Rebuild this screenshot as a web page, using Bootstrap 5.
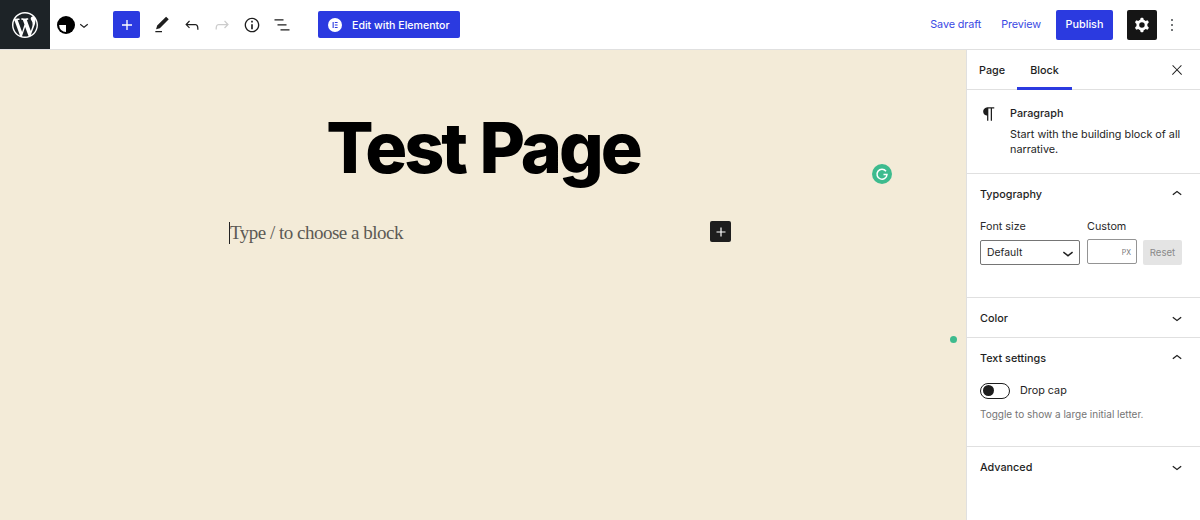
<!doctype html>
<html lang="en"><head><meta charset="utf-8"><title>Test Page</title>
<link rel="stylesheet" href="https://cdn.jsdelivr.net/npm/bootstrap@5.3.0/dist/css/bootstrap.min.css">
<style>
html,body{height:100%;overflow:hidden}
body{font-family:Inter,"Liberation Sans",sans-serif;font-size:10.8px;color:#1e1e1e;background:#fff}
svg{display:block;fill:currentColor}
.ed-top{height:50px;border-bottom:1px solid #e0e0e0;background:#fff}
.wp-box{width:50px;height:49px;background:#1d2327;color:#fff}
.style-pick{margin-left:7px;width:36px}
.blue-sq{width:27px;height:27px;background:#2b3ae0;color:#fff;border-radius:2px;margin-left:20px;padding:0;border:0}
.tool-set{margin-left:7px}
.tool-btn{width:30px;height:30px;padding:0;border:0;background:none;color:#1e1e1e}
.tool-off{color:#ccc}
.ele-btn{margin-left:21px;width:142px;height:27px;background:#2b3ae0;color:#fff;border-radius:2px;border:0;font-size:10.6px;font-weight:500;padding:0 0 0 10px;gap:10px}
.ele-lab{padding-top:2px}
.ele-ico{width:14px;height:14px;background:#fff;border-radius:50%;color:#2b3ae0}
.link-act{color:#3a49e4;font-size:10.8px;font-weight:400;letter-spacing:-.1px;text-decoration:none;padding-top:1px}
.save-gap{margin-right:20px}
.pub-btn{width:57px;height:30px;background:#2b3ae0;color:#fff;border-radius:2px;border:0;font-size:10.8px;font-weight:500;padding:2px 0 0;margin-left:15px}
.gear-btn{width:30px;height:30px;background:#151515;color:#fff;border-radius:2px;border:0;padding:4px;margin-left:14px}
.dot-btn{width:30px;padding:0;border:0;background:none;margin-right:13px}
.ed-main{height:470px}
.ed-canvas{flex:1 1 auto;background:#f3ebd8;position:relative;min-width:0}
.page-title{font-size:70px;font-weight:850;letter-spacing:-3px;word-spacing:2px;line-height:1;color:#000;text-align:center;margin:0;padding-top:63px}
.block-row{width:502px;margin:39px 0 0 229px;height:24px;position:relative}
.ph-text{font-family:"Liberation Serif",serif;font-size:19px;letter-spacing:-.5px;color:#5c5a55;border-left:1px solid #222;line-height:22px;height:22px;white-space:nowrap}
.ins-btn{width:21px;height:21px;background:#1e1e1e;color:#fff;border-radius:2px;border:0;padding:0;position:absolute;right:0;top:-1px}
.gram-big{position:absolute;left:872px;top:114px;width:20px;height:20px;border-radius:50%;background:#3dbb8e;color:#fff}
.gram-dot{position:absolute;left:950px;top:286px;width:7px;height:7px;border-radius:50%;background:#3dbb8e}
.ed-side{width:234px;flex:0 0 234px;border-left:1px solid #e0e0e0;background:#fff}
.side-tabs{height:40px;border-bottom:1px solid #e0e0e0}
.side-tab{height:40px;padding:0 12px;font-weight:500;color:#1e1e1e;line-height:41px}
.side-tab-on{border-bottom:3px solid #2b3ae0;width:55px;text-align:center;padding:0}
.tab-x{margin-left:auto;margin-right:15px}
.sec-box{border-bottom:1px solid #e0e0e0}
.info-box{height:84px;padding:14px 12px 0 12px;gap:11px}
.sec-title{font-weight:500;margin:3px 0 0;line-height:14px}
.info-text{line-height:15px;margin:6px 0 0}
.sec-head{height:39px;padding:0 13px;font-weight:500}
.sec-head span{padding-top:4px}
.sec-h1{height:124px}
.sec-h3{height:109px}
.sec-color{height:40px}
.sec-adv{height:39px}
.field-lab{line-height:14px;color:#2a2a2a;padding-top:1px}
.sel-fake{width:100px;height:25px;border:1px solid #757575;border-radius:2px;padding:0 0 0 6px;margin-top:6px;font-size:10.4px}
.num-wrap{margin-left:7px}
.num-fake{width:50px;height:25px;border:1px solid #949494;border-radius:2px;margin-top:5px;padding:3px 5px 0 0;font-size:7px;color:#757575}
.reset-fake{width:39px;height:25px;background:#e4e4e4;color:#8a8a8a;border-radius:2px;font-size:9.6px;margin-left:6px;margin-top:21px;padding-top:1px}
.type-row{padding:6px 0 0 13px}
.text-body-box{padding:5px 13px 0}
.tog-row{gap:10px}
.tog-lab{padding-top:1px}
.tog-fake{width:30px;height:16px;border:1px solid #1e1e1e;border-radius:8px;padding-left:2px}
.tog-knob{width:11px;height:11px;background:#1e1e1e;border-radius:50%}
.help-txt{font-size:10px;color:#757575;margin:8px 0 0;line-height:14px}
</style></head><body>
<header class="ed-top d-flex align-items-center">
 <div class="wp-box d-flex align-items-center justify-content-center flex-shrink-0"><svg width="26" height="26" viewBox="0 0 20 20"><path d="M20 10c0-5.51-4.49-10-10-10C4.48 0 0 4.49 0 10c0 5.52 4.48 10 10 10 5.51 0 10-4.48 10-10zM7.78 15.37L4.37 6.22c.55-.02 1.17-.08 1.17-.08.5-.06.44-1.13-.06-1.11 0 0-1.45.11-2.37.11-.18 0-.37 0-.58-.01C4.12 2.69 6.87 1.11 10 1.11c2.33 0 4.45.87 6.05 2.34-.68-.11-1.65.39-1.65 1.58 0 .74.45 1.36.9 2.1.35.61.55 1.36.55 2.46 0 1.49-1.4 5-1.4 5l-3.03-8.37c.54-.02.82-.17.82-.17.5-.05.44-1.25-.06-1.22 0 0-1.44.12-2.38.12-.87 0-2.33-.12-2.33-.12-.5-.03-.56 1.2-.06 1.22l.92.08 1.26 3.41zM17.41 10c.24-.64.74-1.87.43-4.25.7 1.29 1.05 2.71 1.05 4.25 0 3.29-1.73 6.24-4.4 7.78.97-2.59 1.94-5.2 2.92-7.78zM6.1 18.09C3.12 16.65 1.11 13.53 1.11 10c0-1.3.23-2.48.72-3.59C3.25 10.3 4.67 14.2 6.1 18.09zm4.03-6.63l2.58 6.98c-.86.29-1.76.45-2.71.45-.79 0-1.57-.11-2.29-.33.81-2.38 1.62-4.74 2.42-7.1z"/></svg></div>
 <div class="style-pick d-flex align-items-center flex-shrink-0">
  <svg width="18" height="18" viewBox="0 0 18 18"><circle cx="9" cy="9" r="9" fill="#000"/><path d="M9 9v6.9A6.9 6.9 0 0 1 2.1 9z" fill="#fff"/></svg>
  <svg width="18" height="18" viewBox="0 0 24 24"><path d="M17.5 11.6L12 16l-5.5-4.4.9-1.2L12 14l4.5-3.6 1 1.2z"/></svg>
 </div>
 <button class="btn blue-sq d-flex align-items-center justify-content-center flex-shrink-0" aria-label="Add block"><svg width="20" height="20" viewBox="0 0 24 24"><path d="M18 11.2h-5.2V6h-1.6v5.2H6v1.6h5.2V18h1.6v-5.2H18z"/></svg></button>
 <div class="tool-set d-flex align-items-center flex-shrink-0">
  <button class="btn tool-btn d-flex align-items-center justify-content-center" aria-label="Tools"><svg width="20" height="20" viewBox="0 0 24 24"><path d="M20.1 5.1L16.9 2 6.2 12.7l-1.3 4.4 4.5-1.3L20.1 5.1zM4 20.8h8v-1.5H4v1.5z"/></svg></button>
  <button class="btn tool-btn d-flex align-items-center justify-content-center" aria-label="Undo"><svg width="20" height="20" viewBox="0 0 24 24"><path d="M18.3 11.7c-.6-.6-1.4-.9-2.3-.9H6.7l2.9-3.3-1.1-1-4.5 5L8.5 16l1-1-2.7-2.7H16c.5 0 .9.2 1.3.5 1 1 1 3.4 1 4.5v.3h1.5v-.2c0-1.5 0-4.3-1.5-5.7z"/></svg></button>
  <button class="btn tool-btn tool-off d-flex align-items-center justify-content-center" aria-label="Redo"><svg width="20" height="20" viewBox="0 0 24 24"><path d="M15.6 6.5l-1.1 1 2.9 3.3H8c-.9 0-1.7.3-2.3.9-1.4 1.5-1.4 4.2-1.4 5.6v.2h1.5v-.3c0-1.1 0-3.5 1-4.5.3-.3.7-.5 1.3-.5h9.2L14.5 15l1.1 1.1 4.6-4.6-4.6-5z"/></svg></button>
  <button class="btn tool-btn d-flex align-items-center justify-content-center" aria-label="Details"><svg width="20" height="20" viewBox="0 0 24 24"><path d="M12 3.2c-4.8 0-8.8 3.9-8.8 8.8 0 4.8 3.9 8.8 8.8 8.8 4.8 0 8.8-3.9 8.8-8.8 0-4.8-4-8.8-8.8-8.8zm0 16c-4 0-7.2-3.3-7.2-7.2C4.8 8 8 4.8 12 4.8s7.2 3.3 7.2 7.2c0 4-3.2 7.2-7.2 7.2zM11 17h2v-6h-2v6zm0-8h2V7h-2v2z"/></svg></button>
  <button class="btn tool-btn d-flex align-items-center justify-content-center" aria-label="List view"><svg width="20" height="20" viewBox="0 0 24 24"><path d="M13.8 5.2H3v1.5h10.8V5.2zm-3.6 12v1.5H21v-1.5H10.2zm7.2-6H6.6v1.5h10.8v-1.5z"/></svg></button>
 </div>
 <button class="btn ele-btn d-flex align-items-center flex-shrink-0"><span class="ele-ico d-flex align-items-center justify-content-center"><svg width="14" height="14" viewBox="0 0 14 14"><path d="M4.6 4h1.1v6H4.6zM6.8 4h2.8v1.1H6.8zM6.8 6.45h2.8v1.1H6.8zM6.8 8.9h2.8V10H6.8z"/></svg></span><span class="ele-lab">Edit with Elementor</span></button>
 <div class="ms-auto d-flex align-items-center">
  <a class="link-act save-gap" href="#">Save draft</a>
  <a class="link-act" href="#">Preview</a>
  <button class="btn pub-btn">Publish</button>
  <button class="btn gear-btn" aria-label="Settings"><svg width="22" height="22" viewBox="0 0 24 24"><path fill-rule="evenodd" d="M10.289 4.836A1 1 0 0111.275 4h1.306a1 1 0 01.987.836l.244 1.466c.787.26 1.503.679 2.108 1.218l1.393-.522a1 1 0 011.216.437l.653 1.13a1 1 0 01-.23 1.273l-1.148.944a6.025 6.025 0 010 2.435l1.149.946a1 1 0 01.23 1.272l-.653 1.13a1 1 0 01-1.216.437l-1.394-.522c-.605.54-1.32.958-2.108 1.218l-.244 1.466a1 1 0 01-.987.836h-1.306a1 1 0 01-.986-.836l-.244-1.466a5.995 5.995 0 01-2.108-1.218l-1.394.522a1 1 0 01-1.217-.436l-.653-1.131a1 1 0 01.23-1.272l1.149-.946a6.026 6.026 0 010-2.435l-1.148-.944a1 1 0 01-.23-1.272l.653-1.131a1 1 0 011.217-.437l1.393.522a5.994 5.994 0 012.108-1.218l.244-1.466zM14.929 12a3 3 0 11-6 0 3 3 0 016 0z"/></svg></button>
  <button class="btn dot-btn d-flex justify-content-center" aria-label="Options"><svg width="20" height="20" viewBox="0 0 24 24"><path d="M13 19h-2v-2h2v2zm0-6h-2v-2h2v2zm0-6h-2V5h2v2z"/></svg></button>
 </div>
</header>
<div class="ed-main d-flex">
 <main class="ed-canvas">
  <h1 class="page-title">Test Page</h1>
  <div class="block-row">
   <div class="ph-text">Type / to choose a block</div>
   <button class="btn ins-btn d-flex align-items-center justify-content-center" aria-label="Add block"><svg width="18" height="18" viewBox="0 0 24 24"><path d="M18 11.2h-5.2V6h-1.6v5.2H6v1.6h5.2V18h1.6v-5.2H18z"/></svg></button>
  </div>
  <div class="gram-big d-flex align-items-center justify-content-center"><svg width="14" height="14" viewBox="0 0 14 14" fill="none"><path d="M11 4.2A5 5 0 1 0 12 7.5H8.5" fill="none" stroke="#fff" stroke-width="1.5"/></svg></div>
  <div class="gram-dot"></div>
 </main>
 <aside class="ed-side">
  <div class="side-tabs d-flex align-items-start">
   <div class="side-tab">Page</div>
   <div class="side-tab side-tab-on">Block</div>
   <div class="tab-x align-self-center"><svg width="16" height="16" viewBox="0 0 24 24"><path d="M13 11.8l6.1-6.3-1-1-6.1 6.2-6.1-6.2-1 1 6.1 6.3-6.5 6.7 1 1 6.5-6.6 6.5 6.6 1-1z"/></svg></div>
  </div>
  <div class="sec-box info-box d-flex">
   <svg class="flex-shrink-0" width="20" height="20" viewBox="0 0 24 24"><path d="M18.3 4H9.9v-.1l-.9.2c-2.3.4-4 2.4-4 4.8s1.7 4.4 4 4.8l.7.1V20h1.5V5.5h2.9V20h1.5V5.5h2.7V4z"/></svg>
   <div><p class="sec-title">Paragraph</p><p class="info-text">Start with the building block of all narrative.</p></div>
  </div>
  <div class="sec-box sec-h1">
   <div class="sec-head d-flex align-items-center justify-content-between"><span>Typography</span><svg width="20" height="20" viewBox="0 0 24 24"><path d="M6.5 12.4L12 8l5.5 4.4-.9 1.2L12 10l-4.5 3.6-1-1.2z"/></svg></div>
   <div class="type-row d-flex">
    <div><div class="field-lab">Font size</div><div class="sel-fake d-flex align-items-center justify-content-between"><span>Default</span><svg width="22" height="22" viewBox="0 0 24 24"><path d="M17.5 11.6L12 16l-5.5-4.4.9-1.2L12 14l4.5-3.6 1 1.2z"/></svg></div></div>
    <div class="num-wrap"><div class="field-lab">Custom</div><div class="num-fake d-flex align-items-center justify-content-end">PX</div></div>
    <div class="reset-fake d-flex align-items-center justify-content-center">Reset</div>
   </div>
  </div>
  <div class="sec-box sec-head sec-color d-flex align-items-center justify-content-between"><span>Color</span><svg width="20" height="20" viewBox="0 0 24 24"><path d="M17.5 11.6L12 16l-5.5-4.4.9-1.2L12 14l4.5-3.6 1 1.2z"/></svg></div>
  <div class="sec-box sec-h3">
   <div class="sec-head d-flex align-items-center justify-content-between"><span>Text settings</span><svg width="20" height="20" viewBox="0 0 24 24"><path d="M6.5 12.4L12 8l5.5 4.4-.9 1.2L12 10l-4.5 3.6-1-1.2z"/></svg></div>
   <div class="text-body-box">
    <div class="tog-row d-flex align-items-center"><div class="tog-fake d-flex align-items-center"><div class="tog-knob"></div></div><span class="tog-lab">Drop cap</span></div>
    <p class="help-txt">Toggle to show a large initial letter.</p>
   </div>
  </div>
  <div class="sec-head sec-adv d-flex align-items-center justify-content-between"><span>Advanced</span><svg width="20" height="20" viewBox="0 0 24 24"><path d="M17.5 11.6L12 16l-5.5-4.4.9-1.2L12 14l4.5-3.6 1 1.2z"/></svg></div>
 </aside>
</div>
</body></html>
